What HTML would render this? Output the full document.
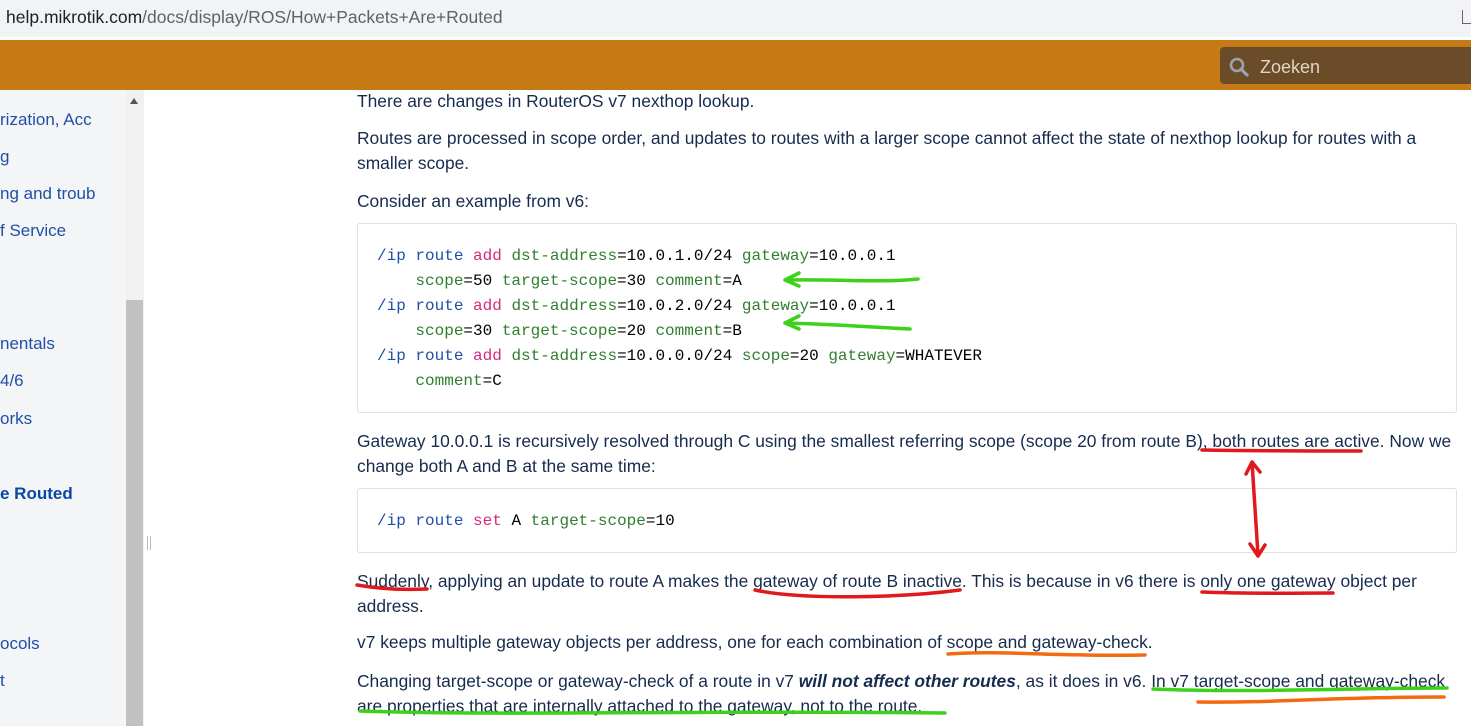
<!DOCTYPE html>
<html><head><meta charset="utf-8"><style>
*{margin:0;padding:0;box-sizing:border-box}
body{width:1471px;height:726px;overflow:hidden;background:#fff;position:relative;font-family:"Liberation Sans",sans-serif;color:#172b4d}
.abs{position:absolute;white-space:nowrap}
.t{font-size:17.4px;line-height:20px;left:357px}
.code{font-family:"Liberation Mono",monospace;font-size:16px;line-height:20px;color:#000;left:377px;white-space:pre}
.b{color:#1f4fa6}.k{color:#d6287f}.g{color:#2f7f2f}
.side{font-size:17px;color:#1f4fa6;left:0}
</style></head><body>
<div class="abs" style="left:0;top:0;width:1471px;height:37px;background:#f1f3f4"></div>
<div class="abs" style="left:6px;top:7px;font-size:17.5px;color:#202124">help.mikrotik.com<span style="color:#5f6368">/docs/display/ROS/How+Packets+Are+Routed</span></div>
<div class="abs" style="left:1462px;top:10px;width:9px;height:14px;border-left:1.5px solid #666;border-bottom:1.5px solid #666"></div>
<div class="abs" style="left:0;top:40px;width:1471px;height:50px;background:#c67a15"></div>
<div class="abs" style="left:1220px;top:47px;width:260px;height:37px;background:#6b4c28;border-radius:4px"></div>
<svg class="abs" style="left:1228px;top:56px" width="22" height="22"><circle cx="9" cy="9" r="6" fill="none" stroke="#9aa4b0" stroke-width="2.6"/><path d="M13 13l6 6" stroke="#9aa4b0" stroke-width="3.2" stroke-linecap="round"/></svg>
<div class="abs" style="left:1260px;top:57px;font-size:18px;color:#e0d4c4">Zoeken</div>

<div class="abs" style="left:0;top:90px;width:126px;height:636px;background:#f4f5f7"></div>
<div class="abs" style="left:126px;top:90px;width:18px;height:636px;background:#f1f1f1"></div>
<div class="abs" style="left:126px;top:300px;width:17px;height:426px;background:#c1c1c1"></div>
<div class="abs" style="left:130px;top:98px;width:0;height:0;border-left:4px solid transparent;border-right:4px solid transparent;border-bottom:6px solid #555"></div>
<div class="abs" style="left:147px;top:536px;height:14px;border-left:1px solid #bbb;border-right:1px solid #bbb;width:4px"></div>
<div class="abs side" style="top:110px">rization, Acc</div>
<div class="abs side" style="top:147px">g</div>
<div class="abs side" style="top:184px">ng and troub</div>
<div class="abs side" style="top:221px">f Service</div>
<div class="abs side" style="top:334px">nentals</div>
<div class="abs side" style="top:371px">4/6</div>
<div class="abs side" style="top:409px">orks</div>
<div class="abs side" style="top:484px;font-weight:bold;color:#0747a6">e Routed</div>
<div class="abs side" style="top:634px">ocols</div>
<div class="abs side" style="top:671px">t</div>

<div class="abs t" style="top:91px">There are changes in RouterOS v7 nexthop lookup.</div>
<div class="abs t" style="top:128px">Routes are processed in scope order, and updates to routes with a larger scope cannot affect the state of nexthop lookup for routes with a</div>
<div class="abs t" style="top:153px">smaller scope.</div>
<div class="abs t" style="top:191px">Consider an example from v6:</div>

<div class="abs" style="left:357px;top:223px;width:1100px;height:190px;border:1px solid #dfe1e6;border-radius:3px"></div>
<div class="abs code" style="top:246px"><span class="b">/ip route</span> <span class="k">add</span> <span class="g">dst-address</span>=10.0.1.0/24 <span class="g">gateway</span>=10.0.0.1</div>
<div class="abs code" style="top:271px">    <span class="g">scope</span>=50 <span class="g">target-scope</span>=30 <span class="g">comment</span>=A</div>
<div class="abs code" style="top:296px"><span class="b">/ip route</span> <span class="k">add</span> <span class="g">dst-address</span>=10.0.2.0/24 <span class="g">gateway</span>=10.0.0.1</div>
<div class="abs code" style="top:321px">    <span class="g">scope</span>=30 <span class="g">target-scope</span>=20 <span class="g">comment</span>=B</div>
<div class="abs code" style="top:346px"><span class="b">/ip route</span> <span class="k">add</span> <span class="g">dst-address</span>=10.0.0.0/24 <span class="g">scope</span>=20 <span class="g">gateway</span>=WHATEVER</div>
<div class="abs code" style="top:371px">    <span class="g">comment</span>=C</div>

<div class="abs t" style="top:431px">Gateway 10.0.0.1 is recursively resolved through C using the smallest referring scope (scope 20 from route B), both routes are active. Now we</div>
<div class="abs t" style="top:456px">change both A and B at the same time:</div>
<div class="abs" style="left:357px;top:488px;width:1100px;height:65px;border:1px solid #dfe1e6;border-radius:3px"></div>
<div class="abs code" style="top:511px"><span class="b">/ip route</span> <span class="k">set</span> A <span class="g">target-scope</span>=10</div>

<div class="abs t" style="top:571px">Suddenly, applying an update to route A makes the gateway of route B inactive. This is because in v6 there is only one gateway object per</div>
<div class="abs t" style="top:596px">address.</div>
<div class="abs t" style="top:632px">v7 keeps multiple gateway objects per address, one for each combination of scope and gateway-check.</div>
<div class="abs t" style="top:671px">Changing target-scope or gateway-check of a route in v7 <b><i>will not affect other routes</i></b>, as it does in v6. In v7 target-scope and gateway-check</div>
<div class="abs t" style="top:696px">are properties that are internally attached to the gateway, not to the route.</div>

<svg class="abs" style="left:0;top:0" width="1471" height="726" fill="none" stroke-linecap="round" stroke-linejoin="round">
<g stroke="#3cd21a" stroke-width="3.5">
<path d="M918 279 C880 283 840 279 785 280 M785 280 l14 -7 M785 280 l14 6"/>
<path d="M910 329 C870 327 830 324 785 323 M785 323 l14 -7 M785 323 l14 6"/>
<path d="M1153 689 C1250 693 1350 688 1447 688"/>
<path d="M360 711 C500 716 700 710 945 713"/>
</g>
<g stroke="#e0191c" stroke-width="3.5">
<path d="M1202 450 C1260 451 1310 451 1361 451"/>
<path d="M1252 462 L1258 555 M1252 462 l-6 12 M1252 462 l8 10 M1258 556 l-8 -12 M1258 556 l7 -11"/>
<path d="M1202 592 C1250 594 1300 593 1333 593"/>
<path d="M357 585 C380 589 405 590 427 589"/>
<path d="M755 590 C800 600 900 598 960 590"/>
</g>
<g stroke="#f26b12" stroke-width="3.5">
<path d="M948 654 C1000 650 1060 657 1145 655"/>
<path d="M1198 702 C1280 703 1330 697 1444 697"/>
</g>
</svg>
</body></html>
